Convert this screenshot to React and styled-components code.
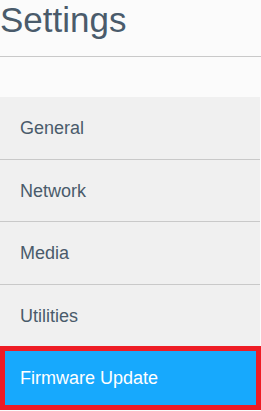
import React from 'react'
import styled, { createGlobalStyle } from 'styled-components'

const GlobalStyle = createGlobalStyle`
  html, body {
    margin: 0;
    padding: 0;
    background: #fbfbfb;
    font-family: "Liberation Sans", Arial, sans-serif;
  }
`

const Page = styled.div`
  width: 261px;
  height: 411px;
  display: flex;
  flex-direction: column;
  overflow: hidden;
`

const Header = styled.div`
  height: 56px;
  border-bottom: 1px solid #c9c9c9;
  box-sizing: content-box;
`

const Title = styled.h1`
  margin: 0;
  font-size: 35px;
  line-height: 40px;
  font-weight: 400;
  color: #4a5b6b;
`

const Spacer = styled.div`
  height: 40px;
`

const Menu = styled.div`
  display: flex;
  flex-direction: column;
  width: 260px;
  background: #f0f0f0;
`

const Item = styled.div`
  height: 61.5px;
  box-sizing: border-box;
  display: flex;
  align-items: center;
  padding: 2px 0 0 20px;
  font-size: 18px;
  color: #4a5b6b;
  border-bottom: ${p => (p.$last ? 'none' : '1px solid #c9c9c9')};
  box-sizing: content-box;
  height: 59.5px;
`

const ActiveItem = styled.div`
  height: 64px;
  box-sizing: border-box;
  margin-right: -1px;
  display: flex;
  align-items: center;
  padding: 1px 0 0 15px;
  font-size: 18px;
  color: #ffffff;
  background: #17a9fd;
  border: 5px solid #ee1c25;
`

const items = ['General', 'Network', 'Media', 'Utilities']

export default function App() {
  return (
    <Page>
      <GlobalStyle />
      <Header>
        <Title>Settings</Title>
      </Header>
      <Spacer />
      <Menu>
        {items.map((name, i) => (
          <Item key={name} $last={i === items.length - 1}>{name}</Item>
        ))}
        <ActiveItem>Firmware Update</ActiveItem>
      </Menu>
    </Page>
  )
}
